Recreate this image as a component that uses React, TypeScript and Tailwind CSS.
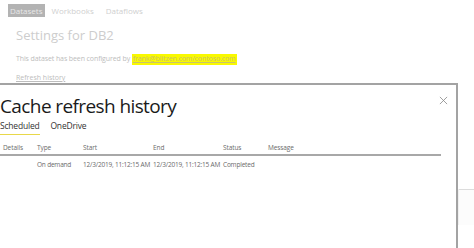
import React from 'react';

const font = { fontFamily: '"Open Sans", "Noto Sans", sans-serif' };

function HistoryTable() {
  const cols = [
    { label: 'Details', w: 'w-[34px]' },
    { label: 'Type', w: 'w-[46px]' },
    { label: 'Start', w: 'w-[70px]' },
    { label: 'End', w: 'w-[70px]' },
    { label: 'Status', w: 'w-[45px]' },
    { label: 'Message', w: 'w-[60px]' },
  ];
  const row = ['', 'On demand', '12/3/2019, 11:12:15 AM', '12/3/2019, 11:12:15 AM', 'Completed', ''];
  return (
    <div className="mr-[15px] mt-[7px]">
      <div className="flex h-[14px] items-center border-b-2 border-[#a8a8a8] pl-[3px] text-[6.5px] tracking-[-0.1px] text-[#6b6b6b]">
        {cols.map((c) => (
          <div key={c.label} className={c.w}>
            {c.label}
          </div>
        ))}
      </div>
      <div className="flex h-[18px] items-center pl-[3px] text-[6.5px] tracking-[-0.2px] text-[#6b6b6b]">
        {row.map((v, i) => (
          <div key={i} className={`${cols[i].w} whitespace-nowrap`}>
            {v}
          </div>
        ))}
      </div>
    </div>
  );
}

export default function App() {
  return (
    <div className="relative h-[248px] w-[474px] overflow-hidden bg-white" style={font}>
      {/* background page */}
      <div className="h-[83px]">
        <div className="flex h-[17px] items-end pl-[8px] text-[8px] text-[#cfcfcf]">
          <div className="flex h-[13px] items-center bg-[#b3b3b3] px-[2px] text-[#e8e8e8]">Datasets</div>
          <div className="flex h-[13px] items-center px-[7px]">Workbooks</div>
          <div className="flex h-[13px] items-center px-[5px]">Dataflows</div>
        </div>
        <div className="pl-[16px] pt-[10px] text-[13px] leading-[16px] text-[#cdcdcd]">Settings for DB2</div>
        <div className="flex items-center pl-[16px] pt-[11px] text-[7px] tracking-[-0.1px] text-[#bdbdbd]">
          <span>This dataset has been configured by&nbsp;</span>
          <span className="bg-[#f9f900] px-[1px] text-[#c9c36a] underline">frank@blitzen.com/contoso.com</span>
        </div>
        <div className="pl-[16px] pt-[8px] text-[7px] text-[#bdbdbd] underline">Refresh history</div>
      </div>

      {/* modal */}
      <div className="flex">
        <div className="h-[165px] w-[458px] border-r-2 border-t-2 border-[#a3a3a3] bg-white">
          <div className="flex items-start justify-between pt-[9px]">
            <div className="text-[19px] leading-[24px] tracking-[-0.6px] text-[#1a1a1a]">Cache refresh history</div>
            <svg width="9" height="9" viewBox="0 0 10 10" className="mr-[8px] mt-[2px]">
              <path d="M1 1 L9 9 M9 1 L1 9" stroke="#8a8a8a" strokeWidth="0.9" fill="none" />
            </svg>
          </div>
          <div className="mt-[2px] flex text-[8.5px] tracking-[-0.2px] text-[#333]">
            <div className="border-b border-[#e8d84a] pb-[1px] pr-[1px]">Scheduled</div>
            <div className="ml-[10px]">OneDrive</div>
          </div>
          <HistoryTable />
        </div>
        <div className="flex-1">
          <div className="mt-[106px] h-[36px] border-l border-[#f0f0f0] bg-[#fcfcfc]">
            <div className="mt-[26px] border-t border-[#dcdcdc]" />
          </div>
        </div>
      </div>
    </div>
  );
}
